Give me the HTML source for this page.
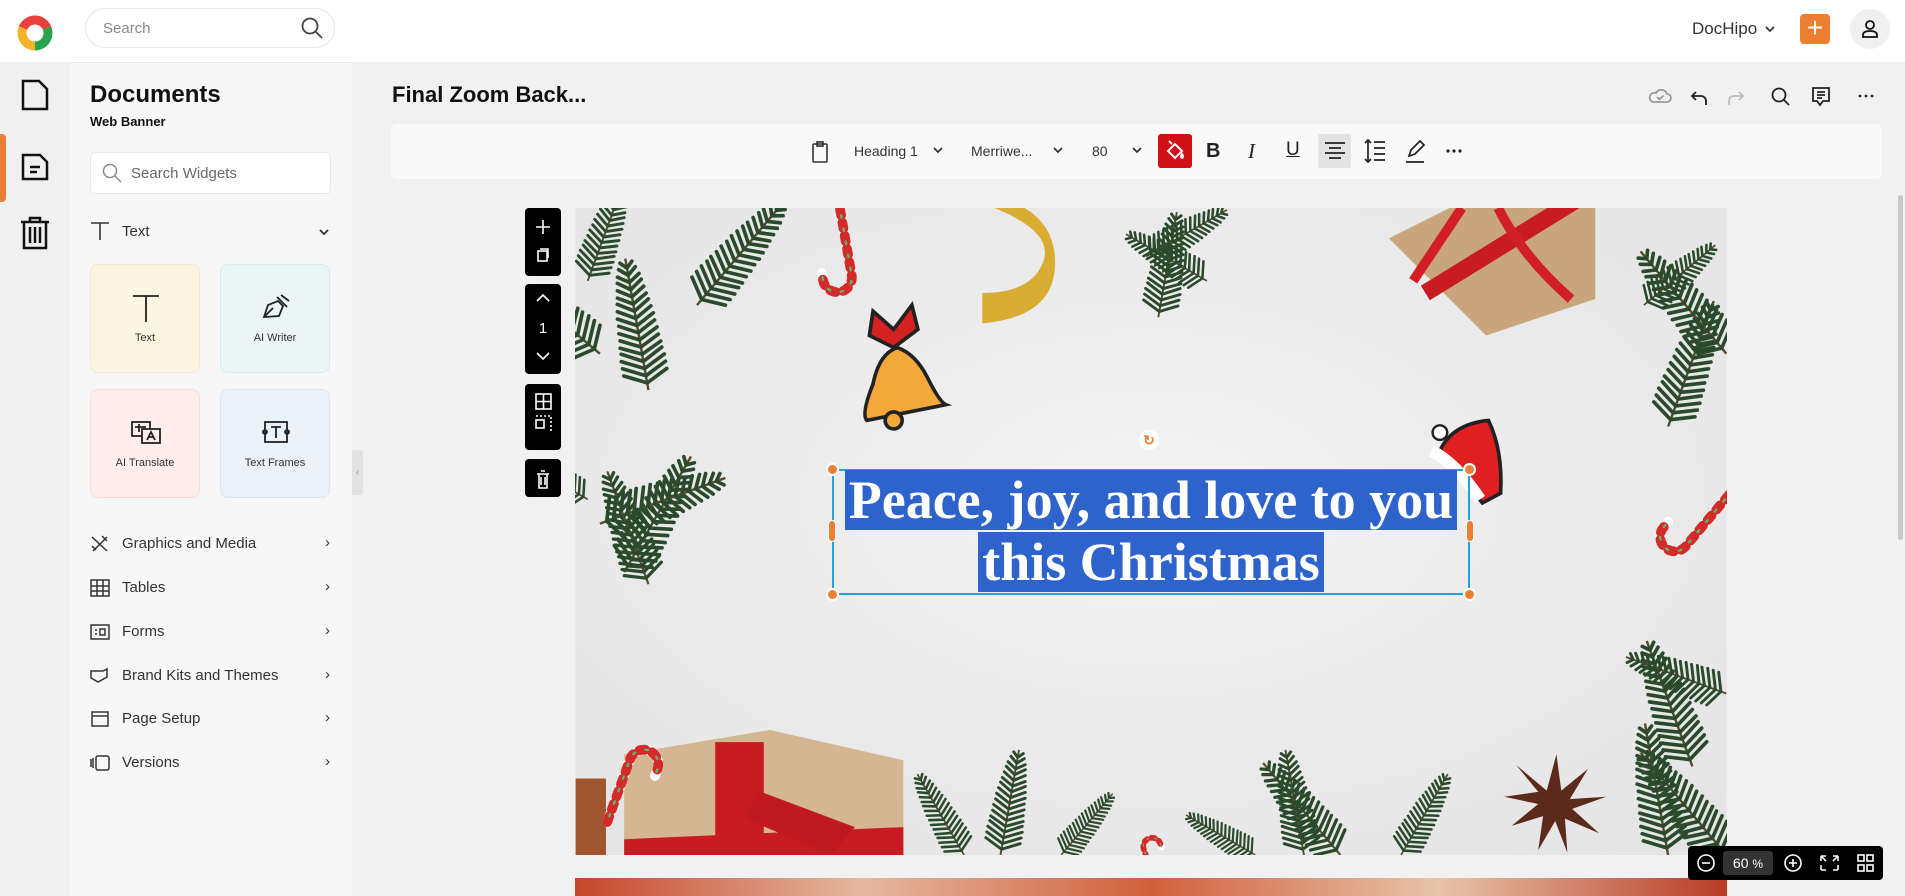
<!DOCTYPE html>
<html><head><meta charset="utf-8">
<style>
*{box-sizing:border-box;margin:0;padding:0}
body{width:1905px;height:896px;overflow:hidden;font-family:"Liberation Sans",sans-serif;background:#f1f1f1;position:relative;color:#222}
.abs{position:absolute}
.top{left:0;top:0;width:1905px;height:63px;background:#fff;border-bottom:1px solid #ececec}
.rail{left:0;top:63px;width:70px;height:833px;background:#f0f0f0}
.panel{left:70px;top:63px;width:282px;height:833px;background:#f7f7f7}
.card{position:absolute;width:110px;height:109px;border-radius:8px;font-size:11px;text-align:center;color:#333}
.card span{position:absolute;left:0;right:0;top:67px}
.card svg{position:absolute;left:40px;top:28px}
.mi{position:absolute;left:90px;width:240px;height:24px;font-size:15px;color:#333}
.mi svg{position:absolute;left:0;top:2px}
.mi .l{position:absolute;left:32px;top:3px}
.mi .c{position:absolute;right:0;top:2px}
.tb{left:391px;top:124px;width:1491px;height:55px;background:#f9f9f9;border-radius:6px}
.ctl{background:#000;border-radius:4px;left:525px;width:36px}
</style></head><body>
<div class="abs top"></div>
<svg class="abs" style="left:16px;top:14px" width="38" height="38" viewBox="0 0 38 38" fill="none" stroke-width="9">
<path d="M7 14 A13 13 0 0 1 31 14" stroke="#e8403a"/>
<path d="M7 14 A13 13 0 0 0 19 32" stroke="#f4b42a"/>
<path d="M31 14 A13 13 0 0 1 19 32" stroke="#27a24f"/>
<path d="M15 12 L26 19 L15 26Z" fill="#fff" stroke="none"/></svg>
<div class="abs" style="left:85px;top:8px;width:250px;height:40px;border:1px solid #e6e6e6;border-radius:20px;font-size:15px;color:#888;padding:11px 0 0 17px">Search</div>
<svg class="abs" style="left:300px;top:16px" width="24" height="24" viewBox="0 0 24 24" fill="none" stroke="#444" stroke-width="1.8"><circle cx="10" cy="10" r="7.5"/><path d="M15.5 15.5L22 22"/></svg>
<div class="abs" style="left:1692px;top:19px;font-size:17px;color:#333">DocHipo</div>
<svg class="abs" style="left:1764px;top:24px" width="12" height="10" viewBox="0 0 12 10" fill="none" stroke="#333" stroke-width="1.8"><path d="M2 3l4 4 4-4"/></svg>
<div class="abs" style="left:1800px;top:14px;width:30px;height:30px;background:#ee7e31;border-radius:4px;color:#fff;font-size:28px;line-height:28px;text-align:center">+</div>
<div class="abs" style="left:1850px;top:9px;width:40px;height:40px;background:#f0f0f0;border-radius:50%"></div>
<svg class="abs" style="left:1860px;top:19px" width="20" height="20" viewBox="0 0 20 20" fill="none" stroke="#111" stroke-width="1.8"><circle cx="10" cy="6" r="4"/><path d="M3 18v-2c0-3 3-4 7-4s7 1 7 4v2z"/></svg>

<div class="abs rail"></div>
<div class="abs" style="left:0;top:134px;width:6px;height:68px;background:#ee7e31;border-radius:0 4px 4px 0"></div>
<svg class="abs" style="left:20px;top:78px" width="30" height="34" viewBox="0 0 30 34" fill="none" stroke="#111" stroke-width="2.5"><path d="M3 3h16l8 8v20H3z"/></svg>
<svg class="abs" style="left:20px;top:152px" width="30" height="30" viewBox="0 0 30 30" fill="none" stroke="#111" stroke-width="2.5"><path d="M3 3h17l7 7v17H3z"/><path d="M10 15h10M10 20h7"/></svg>
<svg class="abs" style="left:19px;top:216px" width="32" height="34" viewBox="0 0 32 34" fill="none" stroke="#111" stroke-width="2.5"><path d="M2 6h28M11 6V2h10v4M5 6v26h22V6M11 11v16M16 11v16M21 11v16"/></svg>

<div class="abs panel"></div>
<div class="abs" style="left:90px;top:81px;font-size:24px;font-weight:bold;color:#111">Documents</div>
<div class="abs" style="left:90px;top:114px;font-size:13px;font-weight:bold;color:#111">Web Banner</div>
<div class="abs" style="left:90px;top:152px;width:241px;height:42px;background:#fff;border:1px solid #e8e8e8;border-radius:5px;font-size:15px;color:#666;padding:12px 0 0 40px">Search Widgets</div>
<svg class="abs" style="left:102px;top:163px" width="20" height="20" viewBox="0 0 20 20" fill="none" stroke="#888" stroke-width="1.5"><circle cx="8" cy="8" r="6.5"/><path d="M13 13l6 6"/></svg>
<svg class="abs" style="left:90px;top:221px" width="20" height="20" viewBox="0 0 20 20" fill="none" stroke="#333" stroke-width="1.6"><path d="M1 2h18M10 2v17"/></svg>
<div class="abs" style="left:122px;top:223px;font-size:15px;color:#333">Text</div>
<svg class="abs" style="left:318px;top:228px" width="12" height="8" viewBox="0 0 12 8" fill="none" stroke="#333" stroke-width="1.8"><path d="M2 2l4 4 4-4"/></svg>

<div class="card" style="left:90px;top:264px;background:#fdf5e2;border:1px solid #f5ead0"><svg width="30" height="30" viewBox="0 0 30 30" fill="none" stroke="#222" stroke-width="1.8"><path d="M2 3h26M15 3v26"/></svg><span>Text</span></div>
<div class="card" style="left:220px;top:264px;background:#e9f6f5;border:1px solid #d8ecec"><svg width="30" height="30" viewBox="0 0 30 30" fill="none" stroke="#222" stroke-width="1.8"><path d="M3 24l4-12 10-4 5 5-4 10z M3 24l9-9M16 4l10 10M20 2l8 6"/></svg><span>AI Writer</span></div>
<div class="card" style="left:90px;top:389px;background:#fdeeed;border:1px solid #f5dede"><svg width="30" height="30" viewBox="0 0 30 30" fill="none" stroke="#222" stroke-width="1.8"><rect x="1" y="4" width="18" height="14"/><rect x="11" y="11" width="18" height="14" fill="#fdeeed"/><path d="M4 9h11M8 6v8M16 22l4-8 4 8M17.5 19h5"/></svg><span>AI Translate</span></div>
<div class="card" style="left:220px;top:389px;background:#eaf1f9;border:1px solid #dbe6f2"><svg width="30" height="30" viewBox="0 0 30 30" fill="none" stroke="#222" stroke-width="1.8"><rect x="4" y="4" width="22" height="20"/><path d="M10 9h10M15 9v11"/><circle cx="4" cy="14" r="2"/><circle cx="26" cy="14" r="2"/></svg><span>Text Frames</span></div>

<div class="mi" style="top:532px"><svg width="20" height="20" viewBox="0 0 20 20" fill="none" stroke="#333" stroke-width="1.5"><path d="M2 3l15 14M17 3L3 17M2 12l4 4M12 2l5 5"/></svg><span class="l">Graphics and Media</span><span class="c">›</span></div>
<div class="mi" style="top:576px"><svg width="20" height="20" viewBox="0 0 20 20" fill="none" stroke="#333" stroke-width="1.5"><rect x="1" y="2" width="18" height="16"/><path d="M1 8h18M1 13h18M7 2v16M13 2v16"/></svg><span class="l">Tables</span><span class="c">›</span></div>
<div class="mi" style="top:620px"><svg width="20" height="20" viewBox="0 0 20 20" fill="none" stroke="#333" stroke-width="1.5"><rect x="1" y="3" width="18" height="14"/><path d="M5 8h2M5 12h2M10 7h5v6h-5z"/></svg><span class="l">Forms</span><span class="c">›</span></div>
<div class="mi" style="top:664px"><svg width="20" height="20" viewBox="0 0 20 20" fill="none" stroke="#333" stroke-width="1.5"><path d="M1 5h12l4 -2v8l-9 5 -7-4z"/></svg><span class="l">Brand Kits and Themes</span><span class="c">›</span></div>
<div class="mi" style="top:707px"><svg width="20" height="20" viewBox="0 0 20 20" fill="none" stroke="#333" stroke-width="1.5"><rect x="2" y="3" width="16" height="14"/><path d="M2 7h16"/></svg><span class="l">Page Setup</span><span class="c">›</span></div>
<div class="mi" style="top:751px"><svg width="20" height="20" viewBox="0 0 20 20" fill="none" stroke="#333" stroke-width="1.5"><rect x="6" y="3" width="13" height="14" rx="2"/><path d="M3 5v10M1 6v8"/></svg><span class="l">Versions</span><span class="c">›</span></div>
<div class="abs" style="left:352px;top:450px;width:11px;height:45px;background:#e2e2e2;border-radius:0 3px 3px 0;color:#999;font-size:10px;line-height:45px;text-align:center">‹</div>

<div class="abs" style="left:392px;top:82px;font-size:22px;font-weight:bold;color:#111">Final Zoom Back...</div>
<svg class="abs" style="left:1648px;top:84px" width="240" height="24" viewBox="0 0 240 24" fill="none" stroke-width="1.8">
<path d="M5 18h14a4 4 0 0 0 0-8 6 6 0 0 0-11-1 4.5 4.5 0 0 0-3 9z M9 13l2.5 2.5 4-4" stroke="#999"/>
<path d="M48 8l-4 4 4 4M44 12h9a5 5 0 0 1 5 5v4" stroke="#222"/>
<path d="M91 8l4 4-4 4M95 12h-9a5 5 0 0 0-5 5v4" stroke="#bbb"/>
<circle cx="131" cy="11" r="6.5" stroke="#222"/><path d="M136 16l5 5" stroke="#222"/>
<path d="M165 4h16v13h-6l-3 4-3-4h-4z M169 8h8M169 11h8M169 14h5" stroke="#222"/>
<circle cx="212" cy="12" r="1.4" fill="#222" stroke="none"/><circle cx="218" cy="12" r="1.4" fill="#222" stroke="none"/><circle cx="224" cy="12" r="1.4" fill="#222" stroke="none"/>
</svg>

<div class="abs tb"></div>
<svg class="abs" style="left:811px;top:141px" width="18" height="22" viewBox="0 0 18 22" fill="none" stroke="#333" stroke-width="1.6"><rect x="2" y="3" width="14" height="18" rx="1"/><rect x="6" y="1" width="6" height="4"/></svg>
<div class="abs" style="left:854px;top:143px;font-size:14px;color:#333">Heading 1</div>
<div class="abs" style="left:971px;top:143px;font-size:14px;color:#333">Merriwe...</div>
<div class="abs" style="left:1092px;top:143px;font-size:14px;color:#333">80</div>
<svg class="abs" style="left:0;top:0" width="1905" height="300" fill="none" stroke="#333" stroke-width="1.8">
<path d="M934 148l4 4 4-4M1054 148l4 4 4-4M1133 148l4 4 4-4"/>
</svg>
<div class="abs" style="left:1158px;top:134px;width:34px;height:34px;background:#d10f16;border-radius:3px"></div>
<svg class="abs" style="left:1164px;top:139px" width="22" height="24" viewBox="0 0 22 24" fill="none" stroke="#fff" stroke-width="2"><path d="M4 12l7-7 7 7-7 7z M8 5l-3-3"/><path d="M18 15q2 3 0 4-2-1 0-4z" fill="#fff"/></svg>
<div class="abs" style="left:1206px;top:140px;font-size:20px;font-weight:bold;color:#222">B</div>
<div class="abs" style="left:1248px;top:139px;font-size:21px;font-style:italic;font-family:'Liberation Serif',serif;color:#222">I</div>
<div class="abs" style="left:1286px;top:139px;font-size:19px;text-decoration:underline;color:#222">U</div>
<div class="abs" style="left:1318px;top:134px;width:33px;height:34px;background:#e3e3e3;border-radius:2px"></div>
<svg class="abs" style="left:1323px;top:140px" width="24" height="22" viewBox="0 0 24 22" stroke="#222" stroke-width="1.8"><path d="M2 3h20M6 8h12M2 13h20M6 18h12"/></svg>
<svg class="abs" style="left:1363px;top:138px" width="24" height="26" viewBox="0 0 24 26" fill="none" stroke="#222" stroke-width="1.7"><path d="M5 2v22M2 5l3-3 3 3M2 21l3 3 3-3M11 4h11M11 10h11M11 16h11M11 22h11"/></svg>
<svg class="abs" style="left:1404px;top:138px" width="22" height="26" viewBox="0 0 22 26" fill="none" stroke="#222" stroke-width="1.7"><path d="M5 18l2-6 9-9 4 4-9 9z M2 24h18"/></svg>
<svg class="abs" style="left:1445px;top:148px" width="20" height="6"><circle cx="3" cy="3" r="1.6" fill="#222"/><circle cx="9" cy="3" r="1.6" fill="#222"/><circle cx="15" cy="3" r="1.6" fill="#222"/></svg>

<!-- canvas -->
<div class="abs" style="left:575px;top:208px;width:1152px;height:647px;background:#ececec;overflow:hidden">
<svg width="1152" height="647" viewBox="0 0 948 533">
<defs>
<radialGradient id="bg" cx="0.5" cy="0.45" r="0.7"><stop offset="0" stop-color="#f3f3f3"/><stop offset="1" stop-color="#e4e4e4"/></radialGradient>
<g id="br"><path d="M0 0V-110" stroke="#5a4a30" stroke-width="2"/>
<path d="M0 -6l-18-9M0 -6l18-9M0 -12l-18-9M0 -12l18-9M0 -18l-18-9M0 -18l18-9M0 -24l-17-9M0 -24l17-9M0 -30l-17-8M0 -30l17-8M0 -36l-16-8M0 -36l16-8M0 -42l-16-8M0 -42l16-8M0 -48l-15-8M0 -48l15-8M0 -54l-15-8M0 -54l15-8M0 -60l-14-8M0 -60l14-8M0 -66l-13-8M0 -66l13-8M0 -72l-12-7M0 -72l12-7M0 -78l-11-7M0 -78l11-7M0 -84l-10-7M0 -84l10-7M0 -90l-9-6M0 -90l9-6M0 -96l-7-6M0 -96l7-6M0 -102l-5-5M0 -102l5-5" stroke="#2a4a2c" stroke-width="3" stroke-linecap="round"/></g>
<g id="cane" fill="none" stroke-linecap="round"><path d="M0 70V15a12 12 0 0 1 24 0v6" stroke="#fff" stroke-width="8"/><path d="M0 70V15a12 12 0 0 1 24 0v6" stroke="#d42a2a" stroke-width="8" stroke-dasharray="5 6"/><path d="M0 70V15a12 12 0 0 1 24 0v6" stroke="#5fb36a" stroke-width="2" stroke-dasharray="2 9" stroke-dashoffset="6"/></g>
</defs>
<rect width="948" height="533" fill="url(#bg)"/>
<use href="#br" transform="translate(60 150) rotate(-10)"/><use href="#br" transform="translate(20 120) rotate(-50)"/><use href="#br" transform="translate(100 80) rotate(40)"/><use href="#br" transform="translate(10 60) rotate(20) scale(0.8)"/>
<use href="#br" transform="translate(40 300) rotate(30)"/><use href="#br" transform="translate(20 260) rotate(70)"/><use href="#br" transform="translate(60 310) rotate(-20) scale(0.9)"/><use href="#br" transform="translate(10 240) rotate(-60) scale(0.7)"/>
<use href="#br" transform="translate(480 90) rotate(10) scale(0.8)"/><use href="#br" transform="translate(520 60) rotate(-60) scale(0.7)"/><use href="#br" transform="translate(470 40) rotate(60) scale(0.7)"/>
<use href="#br" transform="translate(900 180) rotate(20)"/><use href="#br" transform="translate(948 120) rotate(-40)"/><use href="#br" transform="translate(880 80) rotate(50) scale(0.7)"/>
<use href="#br" transform="translate(920 460) rotate(-20)"/><use href="#br" transform="translate(948 533) rotate(-40)"/><use href="#br" transform="translate(900 533) rotate(-10)"/><use href="#br" transform="translate(948 400) rotate(-70) scale(0.8)"/>
<use href="#br" transform="translate(350 533) rotate(10) scale(0.8)"/><use href="#br" transform="translate(320 533) rotate(-30) scale(0.7)"/><use href="#br" transform="translate(400 533) rotate(40) scale(0.6)"/>
<use href="#br" transform="translate(630 533) rotate(-40) scale(0.9)"/><use href="#br" transform="translate(600 533) rotate(-10) scale(0.8)"/><use href="#br" transform="translate(680 533) rotate(30) scale(0.7)"/><use href="#br" transform="translate(560 533) rotate(-60) scale(0.6)"/>
<path d="M345 0q50 20 40 45-10 25-50 25v25q60-5 60-50 0-30-25-45z" fill="#d9ad34"/>
<path d="M670 25l60-30h110v80l-90 30z" fill="#c9a57c"/><path d="M700 70l130-80" stroke="#c81b22" stroke-width="14"/><path d="M730 0q-20 30-40 60M760 0q20 40 60 75" stroke="#d11f25" stroke-width="8" fill="none"/>
<path d="M40 450l120-20 110 25v78H40z" fill="#d4b692"/><path d="M40 520l230-10v23H40z" fill="#c81b22"/><rect x="115" y="440" width="40" height="93" fill="#c81b22"/><path d="M150 480l80 30-20 23-70-30z" fill="#c01a20"/>
<rect x="0" y="470" width="25" height="63" fill="#a0552e"/>
<use href="#cane" transform="translate(230 70) rotate(170)"/><use href="#cane" transform="translate(50 440) rotate(20)"/><use href="#cane" transform="translate(905 290) rotate(-140)"/><use href="#cane" transform="translate(465 520) rotate(-20) scale(0.6)"/>
<path d="M800 480l8-30 4 30 22-18-15 25 30-2-28 10 22 20-28-12 2 28-10-26-14 24 4-28-26 8 22-18-28-6 28-4-18-22z" fill="#5c2a1a"/>
<path d="M240 175q-5-5 5-30 5-25 20-30 15 5 25 25 10 20 15 22z" fill="#f3a93a" stroke="#222" stroke-width="3"/><circle cx="262" cy="175" r="7" fill="#f3a93a" stroke="#222" stroke-width="3"/><path d="M262 115l-20-10 3-20 17 15 15-20 5 20z" fill="#d42121" stroke="#222" stroke-width="3"/>
<path d="M712 200q10-22 40-25 12 25 10 60l-15 8z" fill="#e02020" stroke="#222" stroke-width="3"/><path d="M705 200q20 10 40 40" stroke="#fff" stroke-width="10" fill="none"/><circle cx="712" cy="185" r="6" fill="#fff" stroke="#222" stroke-width="2"/>
</svg>
</div>
<div class="abs" style="left:575px;top:878px;width:1152px;height:18px;background:linear-gradient(90deg,#c5472b,#e4b8a0,#d0603c,#e7c4aa,#b83c26)"></div>

<div class="abs" style="left:832px;top:469px;width:638px;height:126px;border:2px solid #1fa2e8"></div>
<div class="abs" style="left:832px;top:469px;width:638px;text-align:center;font-family:'Liberation Serif',serif;font-size:54px;line-height:62px;color:#fff;font-weight:bold">
<span style="background:#2f63cc;padding:0 4px">Peace, joy, and love to you</span><br><span style="background:#2f63cc;padding:0 4px">this Christmas</span></div>
<div class="abs" style="left:826px;top:463px;width:13px;height:13px;border-radius:50%;background:#ee7e31;border:2px solid #fff"></div>
<div class="abs" style="left:1463px;top:463px;width:13px;height:13px;border-radius:50%;background:#ee7e31;border:2px solid #fff"></div>
<div class="abs" style="left:826px;top:588px;width:13px;height:13px;border-radius:50%;background:#ee7e31;border:2px solid #fff"></div>
<div class="abs" style="left:1463px;top:588px;width:13px;height:13px;border-radius:50%;background:#ee7e31;border:2px solid #fff"></div>
<div class="abs" style="left:828px;top:520px;width:8px;height:22px;border-radius:4px;background:#ee7e31;border:1px solid #fff"></div>
<div class="abs" style="left:1466px;top:520px;width:8px;height:22px;border-radius:4px;background:#ee7e31;border:1px solid #fff"></div>
<div class="abs" style="left:1139px;top:430px;width:20px;height:20px;border-radius:50%;background:#fff;color:#ee7e31;font-size:14px;line-height:20px;text-align:center;font-weight:bold">↻</div>

<div class="abs ctl" style="top:208px;height:68px"></div>
<div class="abs ctl" style="top:284px;height:90px"></div>
<div class="abs ctl" style="top:384px;height:66px"></div>
<div class="abs ctl" style="top:459px;height:38px"></div>
<svg class="abs" style="left:525px;top:208px" width="36" height="290" fill="none" stroke="#fff" stroke-width="1.6">
<path d="M18 12v14M11 19h14"/><rect x="13" y="43" width="9" height="10"/><path d="M15 41h8v9"/>
<path d="M12 93l6-6 6 6M12 145l6 6 6-6"/>
<rect x="11" y="186" width="15" height="15"/><path d="M18.5 186v15M11 193.5h15"/>
<rect x="11" y="212" width="8" height="8"/><path d="M11 208h15v15" stroke-dasharray="2 2"/>
<path d="M12 266h12M14 266v14h8v-14M16 263h4M16 269v8M20 269v8"/>
</svg>
<div class="abs" style="left:525px;top:320px;width:36px;text-align:center;color:#fff;font-size:15px">1</div>

<div class="abs" style="left:1688px;top:846px;width:195px;height:34px;background:#000;border-radius:4px"></div>
<div class="abs" style="left:1723px;top:851px;width:50px;height:24px;background:#333;border-radius:3px;color:#fff;font-size:14px;line-height:24px;text-align:center">60 <span style="font-size:12px">%</span></div>
<svg class="abs" style="left:1688px;top:846px" width="195" height="34" fill="none" stroke="#fff" stroke-width="1.6">
<circle cx="18" cy="17" r="8"/><path d="M14 17h8"/>
<circle cx="105" cy="17" r="8"/><path d="M101 17h8M105 13v8"/>
<path d="M133 10h5M133 10v5M150 10h-5M150 10v5M133 24h5M133 24v-5M150 24h-5M150 24v-5M134 11l4 4M149 11l-4 4"/>
<rect x="170" y="9" width="6" height="6"/><rect x="179" y="9" width="6" height="6"/><rect x="170" y="19" width="6" height="6"/><rect x="179" y="19" width="6" height="6"/>
</svg>
<div class="abs" style="left:1898px;top:195px;width:5px;height:345px;background:#c8c8c8;border-radius:3px"></div>
</body></html>
